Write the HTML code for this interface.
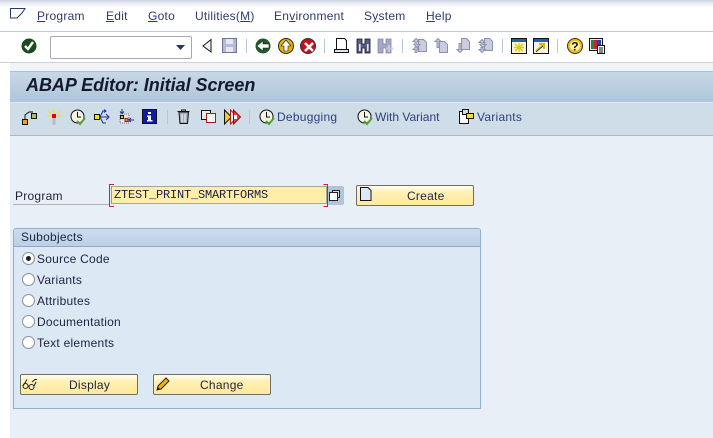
<!DOCTYPE html>
<html><head><meta charset="utf-8"><style>
html,body{margin:0;padding:0;width:713px;height:438px;overflow:hidden;background:#fff}
body{position:relative;font-family:"Liberation Sans",sans-serif;font-size:12px;color:#1c2340;letter-spacing:.25px}
.a{position:absolute;white-space:nowrap}
.m{position:absolute;top:9px;line-height:15px;color:#2e3a6e;font-size:12px}
.m u{text-underline-offset:1px}
.tb{position:absolute;line-height:15px;color:#2e3f7c;font-size:12px;top:110px}
svg{position:absolute;overflow:visible}
.sep{position:absolute;width:1px;background:#b4c6da}
.btn{position:absolute;height:19px;border:1px solid #6f6f68;border-radius:2px;background:linear-gradient(#fffdf0,#fff0b4 35%,#ffe99a);text-align:center;line-height:20px;color:#1c2340;font-size:12px;box-sizing:content-box}
.r{position:absolute;left:22px;width:11px;height:11px;border:1px solid #8d9199;border-radius:50%;background:radial-gradient(#fff 55%,#e6e9ee)}
.l{position:absolute;left:37px;line-height:15px;color:#1c2340;font-size:12px}
</style></head><body>
<div class="a" style="left:0;top:0;width:713px;height:32px;background:linear-gradient(#cbd4e2 0,#e6eaf1 3px,#fff 7px)"></div>
<svg style="left:10px;top:8px" width="16" height="12"><path d="M.5.5H15L12 5 7 10H.5Z" fill="none" stroke="#233a6c"/></svg>
<div class="m" style="left:37px"><u>P</u>rogram</div>
<div class="m" style="left:106px"><u>E</u>dit</div>
<div class="m" style="left:148px"><u>G</u>oto</div>
<div class="m" style="left:195px">Utilities(<u>M</u>)</div>
<div class="m" style="left:274px">En<u>v</u>ironment</div>
<div class="m" style="left:364px">S<u>y</u>stem</div>
<div class="m" style="left:426px"><u>H</u>elp</div>
<div class="a" style="left:0;top:31px;width:713px;height:1px;background:#c3cad4"></div>
<div class="a" style="left:0;top:62px;width:713px;height:1px;background:#cdd3dc"></div>
<div class="a" style="left:10px;top:63px;width:703px;height:8px;background:#f0f4f9"></div>

<!-- system toolbar -->
<svg style="left:21px;top:38px" width="16" height="16"><circle cx="8" cy="8" r="7.5" fill="#1d4a1d"/><path d="M4 8l3 3 5-7" fill="none" stroke="#fff" stroke-width="2.4"/></svg>
<div class="a" style="left:50px;top:36px;width:140px;height:21px;border:1px solid #a5a9ae;border-radius:2px;background:#fff"></div>
<svg style="left:176px;top:45px" width="9" height="5"><path d="M0 0H9L4.5 5Z" fill="#27336b"/></svg>
<svg style="left:202px;top:39px" width="10" height="14"><path d="M9 .5V13L1 7Z" fill="#f2f3f4" stroke="#111"/></svg>
<svg style="left:222px;top:38px" width="15" height="15"><rect x=".5" y=".5" width="14" height="14" fill="#b4bad3" stroke="#6d739c"/><rect x="4" y="1" width="7" height="5" fill="#e6e8f0"/><rect x="4" y="9" width="7" height="5" fill="#e6e8f0"/></svg>
<div class="sep" style="left:246px;top:39px;height:14px"></div>
<svg style="left:255px;top:38px" width="16" height="16"><circle cx="8" cy="8" r="7.5" fill="#1f5a2a"/><path d="M2 8l6-5v3h6v4H8v3Z" fill="#fff" stroke="#111" stroke-width=".5"/></svg>
<svg style="left:278px;top:38px" width="16" height="16"><circle cx="8" cy="8" r="7.5" fill="#e8b400" stroke="#222"/><path d="M8 2l5 6h-3v5H6V8H3Z" fill="#fff" stroke="#111" stroke-width=".6"/></svg>
<svg style="left:300px;top:38px" width="16" height="16"><circle cx="8" cy="8" r="7.5" fill="#c3101c" stroke="#333"/><path d="M5 5l8 8M13 5l-8 8" stroke="#fff" stroke-width="2.6"/></svg>
<div class="sep" style="left:324px;top:39px;height:14px"></div>
<svg style="left:334px;top:38px" width="15" height="15"><path d="M2.5.5h8l2 2v9h-10Z" fill="#fff" stroke="#111"/><rect x=".5" y="11.5" width="14" height="3" fill="#dfe2ea" stroke="#111"/></svg>
<svg style="left:356px;top:38px" width="15" height="15"><path d="M1 1h5v5h3V1h5v14H9v-5H6v5H1Z" fill="#5a608e" stroke="#111" stroke-width=".8"/><rect x="3" y="6" width="1.6" height="7" fill="#e5e7f2"/><rect x="11" y="6" width="1.6" height="7" fill="#e5e7f2"/></svg>
<svg style="left:377px;top:38px" width="16" height="15"><path d="M1 1h5v5h3V1h5v14H9v-5H6v5H1Z" fill="#a3a8c6" stroke="#7e84a8" stroke-width=".8"/><path d="M12 7v7M9 10.500h7" stroke="#c4c8dc" stroke-width="2"/></svg>
<div class="sep" style="left:402px;top:39px;height:14px"></div>
<svg style="left:412px;top:38px" width="16" height="15" fill="#c9cddd" stroke="#8c92ae"><path d="M6.500 1.500h5l3 3v9h-8Z"/><path d="M4 .5l3 3H5v3h3l-3 3-3-3h1V3.500H1Z"/><path d="M4 8.500l3 3H5v3H3v-3H1Z"/></svg>
<svg style="left:434px;top:38px" width="15" height="15" fill="#c9cddd" stroke="#8c92ae"><path d="M5.500 3.500h5l3 3v8h-8Z"/><path d="M4 .5l3 3H5v6H3v-6H1Z"/></svg>
<svg style="left:456px;top:38px" width="15" height="15" fill="#c9cddd" stroke="#8c92ae"><path d="M5.500.5h5l3 3v8h-8Z"/><path d="M4 14.500l3-3H5v-6H3v6H1Z"/></svg>
<svg style="left:478px;top:38px" width="15" height="15" fill="#c9cddd" stroke="#8c92ae"><path d="M6.500.5h5l3 3v9h-8Z"/><path d="M4 1.500l3 3H5v2h3l-3 3-3-3h1v-2H1Z"/><path d="M4 14.500l3-3H5v-2H3v2H1Z"/></svg>
<div class="sep" style="left:502px;top:39px;height:14px"></div>
<svg style="left:511px;top:38px" width="16" height="16"><rect x=".5" y=".5" width="15" height="15" fill="#f7f3d0" stroke="#111"/><rect x="1" y="1" width="14" height="3" fill="#2c5ea0"/><path d="M8 5v9M4 6l8 7M12 6l-8 7M3 9.500h10" stroke="#e8c400" stroke-width="1.200"/></svg>
<svg style="left:533px;top:38px" width="16" height="16"><rect x=".5" y=".5" width="15" height="15" fill="#f2f2f2" stroke="#111"/><rect x="1" y="1" width="14" height="3" fill="#2c5ea0"/><path d="M3 13l7-6M6 6h5v5" fill="none" stroke="#d8b800" stroke-width="2"/><path d="M3 14l7-6" stroke="#111" stroke-width=".6"/></svg>
<div class="sep" style="left:557px;top:39px;height:14px"></div>
<svg style="left:567px;top:38px" width="16" height="16"><circle cx="8" cy="8" r="7.500" fill="#f2be10" stroke="#333"/><circle cx="8" cy="8" r="5" fill="#fff3b0"/><text x="8" y="12.500" text-anchor="middle" font-family="Liberation Sans" font-weight="bold" font-size="12" fill="#111">?</text></svg>
<svg style="left:589px;top:38px" width="16" height="16"><rect x=".5" y=".5" width="13" height="12" fill="#eee" stroke="#111"/><rect x="2" y="2" width="3" height="9" fill="#1d8a3a"/><rect x="5" y="2" width="3" height="9" fill="#cc2030"/><rect x="8" y="2" width="4" height="9" fill="#2040b0"/><rect x="8.500" y="7.500" width="7" height="8" fill="#fff" stroke="#111"/><path d="M10 10h4M10 12h4M10 14h4" stroke="#111"/></svg>

<!-- main area -->
<div class="a" style="left:10px;top:71px;width:703px;height:367px;background:#e8eff7"></div>
<div class="a" style="left:10px;top:71px;width:703px;height:32px;border-top:1px solid #a9bdd3;box-sizing:border-box;background:linear-gradient(#c8d7e7,#aec5dc)"></div>
<div class="a" style="left:10px;top:102px;width:703px;height:1px;background:#dfe8f1"></div>
<div class="a" style="left:10px;top:103px;width:703px;height:32px;background:#cfdde9"></div>
<div class="a" style="left:10px;top:135px;width:703px;height:1px;background:#a8b9cc"></div>
<div class="a" style="left:26px;top:75px;font-size:18px;line-height:21px;font-weight:bold;font-style:italic;color:#14192e;letter-spacing:-.04px">ABAP Editor: Initial Screen</div>

<!-- app toolbar -->
<svg style="left:22px;top:109px" width="16" height="16"><path d="M3 10V6l4-3h4" fill="none" stroke="#111"/><rect x=".5" y="10.500" width="5" height="5" fill="#f0a020" stroke="#111"/><rect x="9.500" y="4.500" width="5" height="5" fill="#a8c060" stroke="#111"/></svg>
<svg style="left:46px;top:109px" width="16" height="16"><path d="M8 0v5M2 2l3 3M14 2l-3 3M1 7h4M11 7h4" stroke="#f5e020" stroke-width="1.200"/><rect x="6.500" y="8" width="3" height="8" fill="#b8bcc8"/><rect x="6" y="5" width="4" height="4" fill="#e0001c"/></svg>
<svg style="left:70px;top:109px" width="16" height="16"><circle cx="7.500" cy="7.500" r="6.500" fill="#f4f4e6" stroke="#111"/><path d="M7.500 3v5H11" fill="none" stroke="#111"/><path d="M7 12l3 3 5-6" fill="none" stroke="#58a030" stroke-width="2"/></svg>
<svg style="left:94px;top:109px" width="16" height="16"><rect x=".5" y="5.500" width="5" height="5" fill="#f4e020" stroke="#111"/><path d="M5 8h10M12 5l3 3-3 3M6 8l3-6h3M10 .5l2 1.500-2 1.500M6 8l3 6h3" fill="none" stroke="#1c2fa0"/></svg>
<svg style="left:118px;top:109px" width="16" height="16"><rect x="2" y="5" width="9" height="9" fill="#dfe2e8" stroke="#777" stroke-dasharray="1 1"/><rect x="2.500" y="6.500" width="3" height="3" fill="#f0c020" stroke="#111"/><rect x="7" y="9.500" width="3" height="3" fill="#e08080" stroke="#a02020"/><path d="M4 0v5M2 2.500l2 2 2-2M11 11h5M13 9l-2 2 2 2" fill="none" stroke="#1c2fa0"/></svg>
<svg style="left:142px;top:109px" width="15" height="15"><rect x=".5" y=".5" width="14" height="14" fill="#0a1ea8" stroke="#111"/><path d="M6 3h3v2H6ZM5 6.500h4V11h1.500v1.500h-5.500V11H6V8H5Z" fill="#fff"/></svg>
<div class="sep" style="left:167px;top:110px;height:14px"></div>
<svg style="left:177px;top:109px" width="14" height="15"><path d="M.5 2.500h12M4.500 2.500V1h4v1.500" fill="none" stroke="#111"/><path d="M2 3h9.500l-1 11.500H3Z" fill="#a5adb8" stroke="#111"/><path d="M5 5v8M8 5v8" stroke="#fff"/></svg>
<svg style="left:201px;top:109px" width="15" height="15"><rect x=".5" y="1.500" width="9" height="9" fill="#e8e8e8" stroke="#111"/><rect x="5.500" y="4.500" width="9" height="9" fill="#f4f4f4" stroke="#9c1c1c"/></svg>
<svg style="left:224px;top:109px" width="17" height="16"><path d="M.5 1l7 7-7 7Z" fill="#ecd020" stroke="#111"/><path d="M6.500 1l7 7-7 7Z" fill="#f2f2e8" stroke="#b01818"/><path d="M9.500 1l7 7-7 7Z" fill="#e8404a" stroke="#8c1010"/><rect x="10" y="6" width="3" height="4" fill="#fff"/></svg>
<div class="sep" style="left:249px;top:110px;height:14px"></div>
<svg style="left:259px;top:109px" width="16" height="16"><circle cx="7.500" cy="7.500" r="6.500" fill="#f4f4e6" stroke="#111"/><path d="M7.500 3v5H11" fill="none" stroke="#111"/><path d="M7 12l3 3 5-6" fill="none" stroke="#58a030" stroke-width="2"/></svg>
<div class="tb" style="left:277px">Debugging</div>
<svg style="left:357px;top:109px" width="16" height="16"><circle cx="7.500" cy="7.500" r="6.500" fill="#f4f4e6" stroke="#111"/><path d="M7.500 3v5H11" fill="none" stroke="#111"/><path d="M7 12l3 3 5-6" fill="none" stroke="#58a030" stroke-width="2"/></svg>
<div class="tb" style="left:375px;letter-spacing:0">With Variant</div>
<svg style="left:459px;top:109px" width="16" height="16"><path d="M.5 2.500h5v2h4v10h-9Z" fill="#fff" stroke="#111"/><rect x="3.500" y=".5" width="6" height="5" fill="#d8d8d8" stroke="#111"/><rect x="7.500" y="4.500" width="7" height="5" fill="#f4dc20" stroke="#111"/></svg>
<div class="tb" style="left:477px">Variants</div>

<!-- program row -->
<div class="a" style="left:15px;top:189px;line-height:15px;color:#1c2340">Program</div>
<div class="a" style="left:13px;top:204px;width:97px;height:1px;background:#b0b4b8"></div>
<div class="a" style="left:111px;top:186px;width:216px;height:18px;box-sizing:border-box;background:#ffeea8;border:1px solid #a6a79c;border-left-color:#9a9a90;font-family:'Liberation Mono',monospace;font-size:12px;line-height:16px;padding-left:2px;color:#1c2340;letter-spacing:-.2px">ZTEST_PRINT_SMARTFORMS</div>
<svg style="left:109px;top:184px" width="6" height="23"><path d="M5 .5H.500V22.500H5" fill="none" stroke="#d81e28"/></svg>
<svg style="left:323px;top:184px" width="6" height="23"><path d="M.5 .5H4.500V22.500H.5" fill="none" stroke="#d81e28"/></svg>
<div class="a" style="left:328px;top:186px;width:16px;height:19px;background:#b4c4d8;border-radius:0 2px 2px 0"></div>
<svg style="left:329px;top:190px" width="12" height="12"><rect x="3.500" y=".5" width="7" height="7" fill="#d8dde4" stroke="#222"/><rect x=".5" y="2.500" width="8" height="8" fill="#fff" stroke="#222"/></svg>
<div class="btn" style="left:356px;top:185px;width:116px"><span class="a" style="left:50px;top:0">Create</span></div>
<svg style="left:360px;top:187px" width="12" height="15"><path d="M.5.500H8l3 3V13.500H.5Z" fill="#dbe8f6" stroke="#111"/></svg>

<!-- subobjects -->
<div class="a" style="left:13px;top:228px;width:468px;height:181px;box-sizing:border-box;border:1px solid #8fb0d0;border-radius:3px 3px 0 0;background:#dde8f5"></div>
<div class="a" style="left:14px;top:229px;width:466px;height:17px;background:linear-gradient(#cddcec,#bcd1e6);border-bottom:1px solid #8fa9c8;border-radius:2px 2px 0 0"></div>
<div class="a" style="left:21px;top:230px;line-height:15px;color:#1c2340">Subobjects</div>
<div class="r" style="top:252px"></div><div class="a" style="left:26px;top:256px;width:5px;height:5px;border-radius:50%;background:#222"></div><div class="l" style="top:252px">Source Code</div>
<div class="r" style="top:273px"></div><div class="l" style="top:273px">Variants</div>
<div class="r" style="top:294px"></div><div class="l" style="top:294px">Attributes</div>
<div class="r" style="top:315px"></div><div class="l" style="top:315px">Documentation</div>
<div class="r" style="top:336px"></div><div class="l" style="top:336px">Text elements</div>

<div class="btn" style="left:20px;top:374px;width:116px"><span class="a" style="left:48px;top:0">Display</span></div>
<svg style="left:22px;top:379px" width="16" height="11"><path d="M1 7L5 .5M10 3l3-2.500h2" fill="none" stroke="#222"/><circle cx="3.500" cy="7" r="2.500" fill="none" stroke="#222"/><circle cx="9.500" cy="8" r="2.500" fill="none" stroke="#222"/><path d="M6 7l1 0M12 7l2-4" fill="none" stroke="#222"/></svg>
<div class="btn" style="left:153px;top:374px;width:116px"><span class="a" style="left:46px;top:0">Change</span></div>
<svg style="left:156px;top:377px" width="14" height="14"><path d="M1 13l1-4L10 1l3 3-8 8Z" fill="#f0b010" stroke="#222"/><path d="M1 13l1-3 2 2Z" fill="#222"/></svg>
</body></html>
